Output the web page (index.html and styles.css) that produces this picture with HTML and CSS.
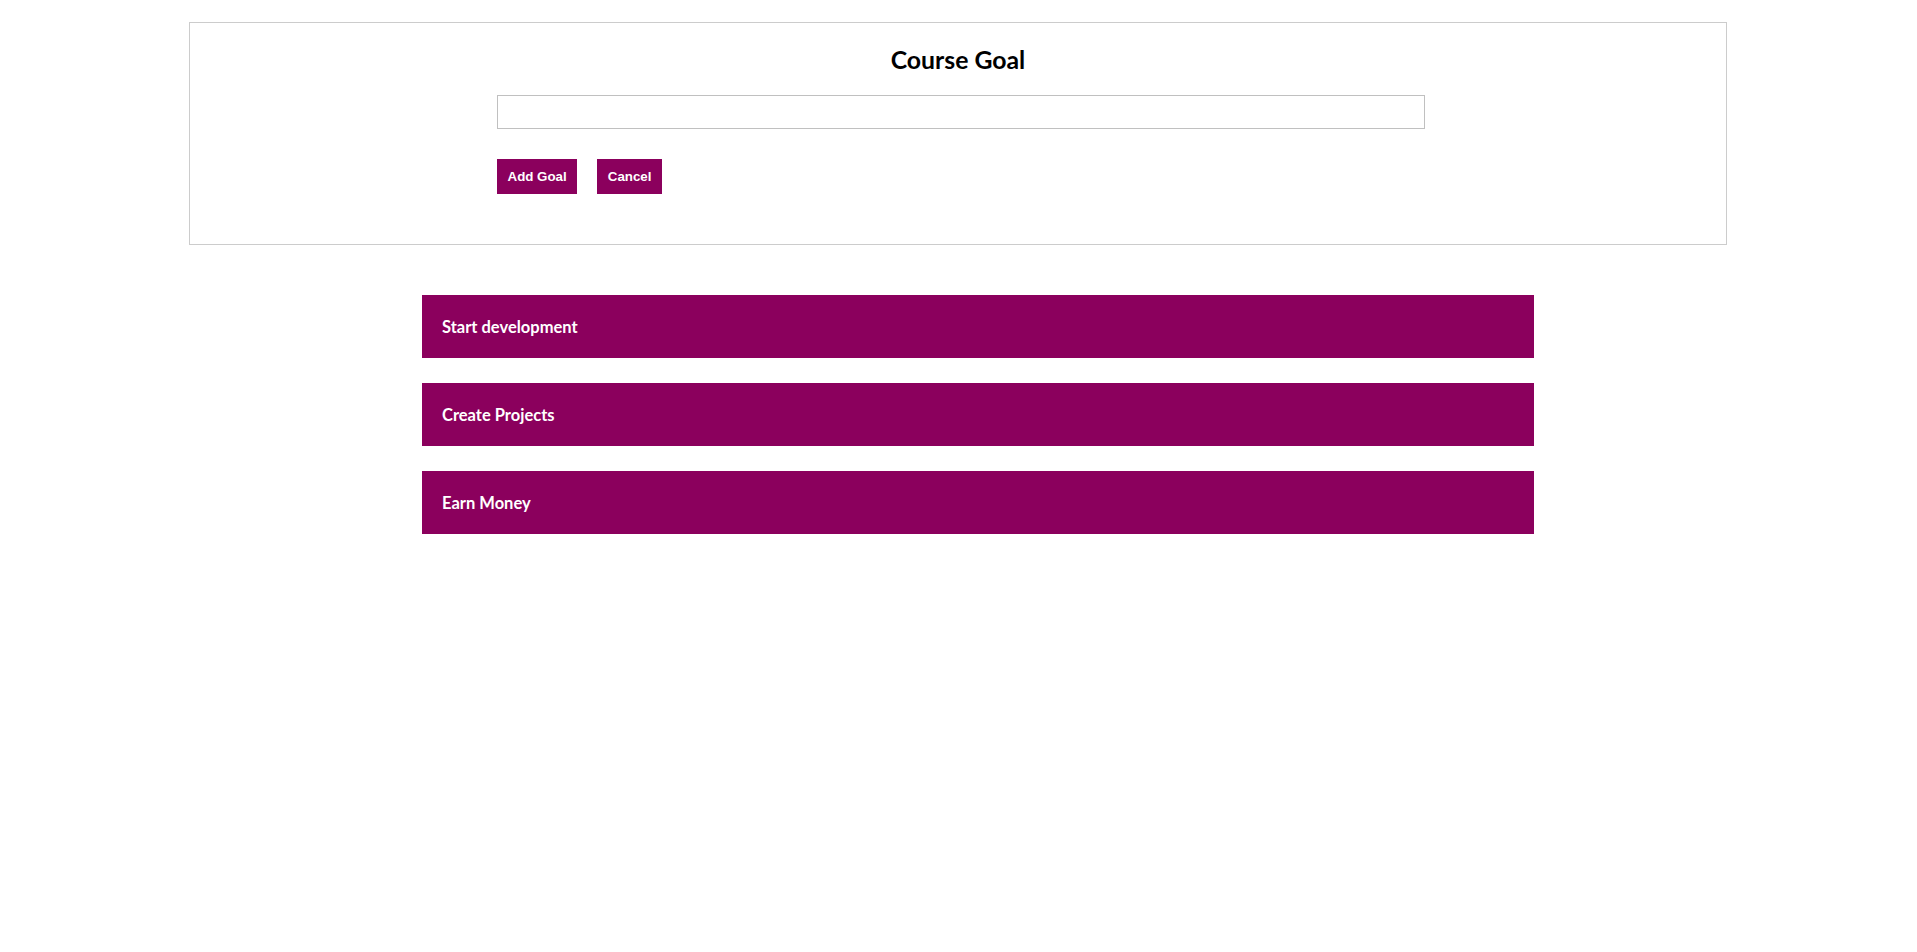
FILE: index.html
```html
<!DOCTYPE html>
<html lang="en">
<head>
<meta charset="utf-8">
<title>Course Goals</title>
<link rel="stylesheet" href="styles.css">
</head>
<body>
  <section class="goal-card">
    <h2 class="goal-title">Course Goal</h2>
    <form class="goal-form">
      <input class="goal-input" type="text">
      <div class="goal-actions">
        <button type="button" class="btn">Add Goal</button>
        <button type="button" class="btn">Cancel</button>
      </div>
    </form>
  </section>
  <ul class="goal-list">
    <li class="goal-item">Start development</li>
    <li class="goal-item">Create Projects</li>
    <li class="goal-item">Earn Money</li>
  </ul>
</body>
</html>
```

FILE: styles.css
```css
html, body {
  margin: 0;
  padding: 0;
  background: #ffffff;
}

body {
  padding-right: 1px;
  font-family: "Lato", "Open Sans", sans-serif;
  color: #000;
}

.goal-card {
  box-sizing: border-box;
  width: 1538px;
  margin: 22px auto 0;
  border: 1px solid #cccccc;
  padding: 23px 0 50px;
}

.goal-title {
  margin: 0;
  text-align: center;
  font-size: 24.8px;
  line-height: 28px;
  font-weight: 700;
}

.goal-form {
  box-sizing: border-box;
  width: 934px;
  margin: 21px auto 0;
  padding-left: 6px;
}

.goal-input {
  display: block;
  box-sizing: border-box;
  width: 928px;
  height: 34px;
  margin: 0;
  border: 1px solid #c0c0c0;
  padding: 0 6px;
  font: inherit;
}

.goal-actions {
  display: flex;
  gap: 20px;
  margin-top: 30px;
}

.btn {
  font-family: "Liberation Sans", Arial, sans-serif;
  font-size: 13.333px;
  font-weight: 700;
  line-height: 15px;
  color: #ffffff;
  background: #8b005d;
  border: none;
  padding: 10px 10.5px;
  margin: 0;
}

.goal-list {
  box-sizing: border-box;
  list-style: none;
  width: 1152px;
  margin: 50px auto 0;
  padding: 0 0 0 40px;
  display: flex;
  flex-direction: column;
  gap: 25px;
}

.goal-item {
  display: flex;
  align-items: center;
  height: 63px;
  padding: 0 20px;
  background: #8b005d;
  color: #ffffff;
  font-size: 16.5px;
  font-weight: 700;
}
```
